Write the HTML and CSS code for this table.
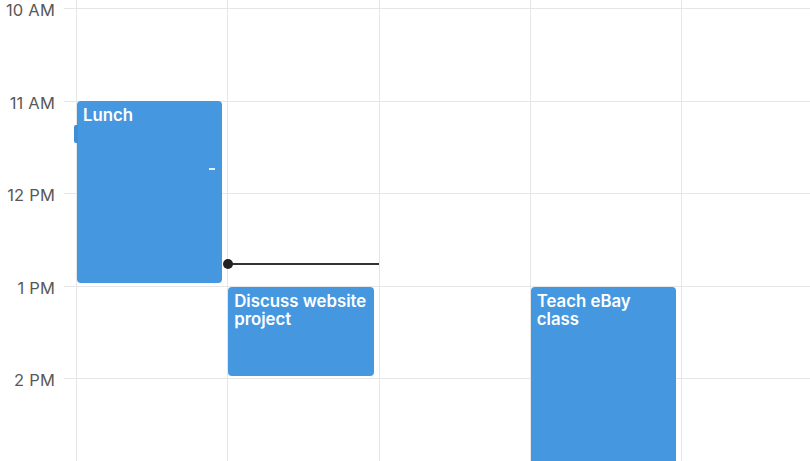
FILE: index.html
```html
<!DOCTYPE html>
<html lang="en">
<head>
<meta charset="utf-8">
<title>Calendar</title>
<link rel="stylesheet" href="styles.css">
</head>
<body>
<div class="calendar">
  <div class="hours">
    <div class="hour"><span class="hour-label">10 AM</span><span class="hour-line"></span></div>
    <div class="hour"><span class="hour-label">11 AM</span><span class="hour-line"></span></div>
    <div class="hour"><span class="hour-label">12 PM</span><span class="hour-line"></span></div>
    <div class="hour"><span class="hour-label">1 PM</span><span class="hour-line"></span></div>
    <div class="hour"><span class="hour-label">2 PM</span><span class="hour-line"></span></div>
  </div>
  <div class="days">
    <div class="day">
      <div class="event event-lunch" style="top:101px;height:182px;">
        <span class="event-title">Lunch</span>
      </div>
    </div>
    <div class="day">
      <div class="now-line" style="top:263px;"><span class="now-dot"></span></div>
      <div class="event" style="top:287px;height:89px;">
        <span class="event-title">Discuss website project</span>
      </div>
    </div>
    <div class="day"></div>
    <div class="day">
      <div class="event" style="top:287px;height:200px;">
        <span class="event-title">Teach eBay class</span>
      </div>
    </div>
    <div class="day"></div>
  </div>
</div>
</body>
</html>
```

FILE: styles.css
```css
html, body {
  margin: 0;
  padding: 0;
  background: #ffffff;
  overflow: hidden;
}

body {
  width: 810px;
  height: 461px;
  font-family: "Inter", "Noto Sans", sans-serif;
}

.calendar {
  position: relative;
  width: 810px;
  height: 461px;
  overflow: hidden;
}

.hours {
  display: flex;
  flex-direction: column;
  padding-top: 8px;
}

.hour {
  display: flex;
  height: 92.5px;
  flex-shrink: 0;
}

.hour-label {
  width: 64px;
  box-sizing: border-box;
  padding-right: 9px;
  text-align: right;
  font-size: 16.5px;
  line-height: 18px;
  color: #585858;
  letter-spacing: 0.2px;
  transform: translateY(-7px);
}

.hour-line {
  flex: 1;
  border-top: 1px solid #e6e6e6;
}

.days {
  position: absolute;
  top: 0;
  left: 76px;
  bottom: 0;
  display: grid;
  grid-template-columns: repeat(5, 151.25px);
}

.day {
  position: relative;
  border-left: 1px solid #e6e6e6;
}

.event {
  position: absolute;
  left: 0;
  right: 5px;
  box-sizing: border-box;
  padding: 5px 0 5px 6px;
  background: #4598df;
  border-radius: 4px;
  color: #ffffff;
}

.event-title {
  display: block;
  font-size: 16.8px;
  font-weight: 600;
  line-height: 18px;
}

.event-lunch::before {
  content: "";
  position: absolute;
  left: -3px;
  top: 24px;
  width: 4px;
  height: 18px;
  background: #3f8fd6;
  border-radius: 2px 0 0 2px;
}

.event-lunch::after {
  content: "";
  position: absolute;
  left: 132px;
  top: 67px;
  width: 6px;
  height: 2px;
  background: rgba(255, 255, 255, 0.85);
}

.now-line {
  position: absolute;
  left: 0;
  right: 0;
  height: 2px;
  background: #333333;
}

.now-dot {
  position: absolute;
  left: -5px;
  top: -4px;
  width: 10px;
  height: 10px;
  border-radius: 50%;
  background: #222222;
}
```
